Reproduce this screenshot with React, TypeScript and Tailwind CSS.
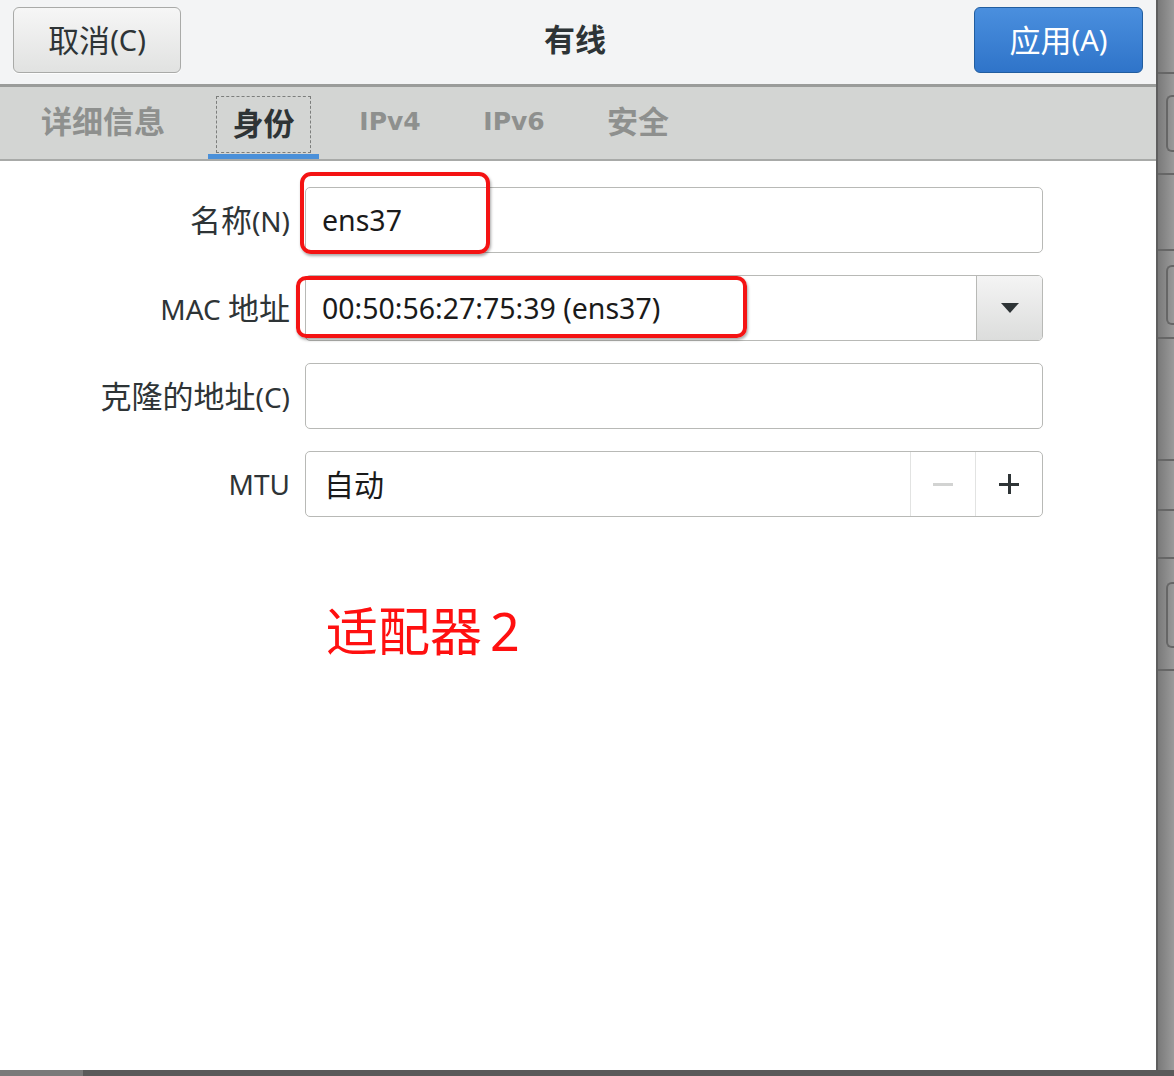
import React from "react";

const FONT = { fontFamily: '"Noto Sans", "Noto Sans CJK SC", sans-serif' };
const BOLD_FONT = { fontFamily: '"DejaVu Sans", "Noto Sans CJK SC", sans-serif' };

// Wraps runs of CJK characters so they render a touch larger than the Latin text around them
function Mixed({ text, cjk }: { text: string; cjk: string }) {
  const parts = text.split(/([\u4e00-\u9fff]+)/).filter(Boolean);
  return (
    <>
      {parts.map((p, i) =>
        /[\u4e00-\u9fff]/.test(p) ? (
          <span key={i} className={cjk}>
            {p}
          </span>
        ) : (
          <span key={i}>{p}</span>
        )
      )}
    </>
  );
}

function Triangle() {
  return (
    <svg width="18" height="10" viewBox="0 0 18 10">
      <path d="M0 0 L18 0 L9 10 Z" fill="#2e3436" />
    </svg>
  );
}

function Field({ children }: { children?: React.ReactNode }) {
  return (
    <div className="flex h-[66px] w-[738px] items-stretch overflow-hidden rounded-[5px] border border-[#b8b9b6] bg-white">
      {children}
    </div>
  );
}

function Row({ label, children }: { label: string; children: React.ReactNode }) {
  return (
    <div className="flex items-center">
      <div className="w-[291px] pr-[1px] text-right text-[28px] leading-none text-[#2e3436]">
        <Mixed text={label} cjk="text-[31px]" />
      </div>
      <div className="ml-[14px]">{children}</div>
    </div>
  );
}

export default function App() {
  const tabs = [
    { name: "详细信息", w: "w-[126px]", ml: "ml-[40px]", size: "text-[31px]" },
    { name: "身份", active: true },
    { name: "IPv4", w: "w-[56px]", ml: "ml-[43px]", size: "text-[25px]" },
    { name: "IPv6", w: "w-[56px]", ml: "ml-[68px]", size: "text-[25px]" },
    { name: "安全", w: "w-[62px]", ml: "ml-[65px]", size: "text-[31px]" },
  ];

  return (
    <div className="flex h-[1076px] w-[1174px] flex-col overflow-hidden bg-[#5c5c5c]" style={FONT}>
      <div className="flex h-[1070px]">
        {/* dialog */}
        <div className="relative flex h-full w-[1156px] flex-col bg-white">
          {/* header bar */}
          <div className="relative flex h-[87px] items-start justify-between border-b-[3px] border-[#9a9c9a] bg-[#f3f4f5] px-[13px] pt-[7px]">
            <button className="flex h-[66px] w-[168px] items-center justify-center rounded-[6px] border border-[#a9aaa8] bg-gradient-to-b from-[#f6f6f6] to-[#e1e2e1] text-[29px] text-[#2e3436] shadow-[0_1px_0_rgba(255,255,255,0.8)]">
              <Mixed text="取消(C)" cjk="text-[31px]" />
            </button>
            <div
              className="absolute left-[475px] top-[17px] w-[200px] text-center text-[31px] font-bold text-[#2e3436]"
              style={BOLD_FONT}
            >
              有线
            </div>
            <button className="flex h-[66px] w-[169px] items-center justify-center rounded-[6px] border border-[#215d9f] bg-gradient-to-b from-[#4a8fde] to-[#2f74c9] text-[29px] text-white">
              <Mixed text="应用(A)" cjk="text-[31px]" />
            </button>
          </div>

          {/* tabs */}
          <div
            className="flex h-[74px] items-stretch border-b-[2px] border-[#a8aaa8] bg-[#d3d5d3] font-bold"
            style={BOLD_FONT}
          >
            {tabs.map((t) =>
              t.active ? (
                <div key={t.name} className="ml-[42px] flex w-[111px] flex-col items-center">
                  <div className="mt-[9px] flex h-[57px] w-[95px] items-center justify-center border border-dashed border-[#7c7e7c] text-[31px] text-[#2e3436]">
                    {t.name}
                  </div>
                  <div className="mt-auto h-[5px] w-full bg-[#4a90d9]" />
                </div>
              ) : (
                <div
                  key={t.name}
                  className={`${t.ml} ${t.w} ${t.size} flex items-center justify-center pb-[2px] text-[#8e908e]`}
                >
                  {t.name}
                </div>
              )
            )}
          </div>

          {/* form */}
          <div className="flex flex-col gap-[22px] pt-[26px]">
            <Row label="名称(N)">
              <Field>
                <div className="flex items-center pl-[16px] text-[28.5px] text-[#1a1a1a]">ens37</div>
              </Field>
            </Row>
            <Row label="MAC 地址">
              <Field>
                <div className="flex flex-1 items-center pl-[16px] text-[28.5px] text-[#1a1a1a]">
                  00:50:56:27:75:39 (ens37)
                </div>
                <div className="flex w-[66px] items-center justify-center border-l border-[#b8b9b6] bg-gradient-to-b from-[#f4f4f4] to-[#dcdddc]">
                  <Triangle />
                </div>
              </Field>
            </Row>
            <Row label="克隆的地址(C)">
              <Field />
            </Row>
            <Row label="MTU">
              <Field>
                <div className="flex flex-1 items-center pl-[18px] text-[30px] text-[#1a1a1a]">自动</div>
                <div className="flex w-[65px] items-center justify-center border-l border-[#e2e3e2]">
                  <div className="h-[3px] w-[20px] bg-[#d2d3d2]" />
                </div>
                <div className="relative flex w-[67px] items-center justify-center border-l border-[#e2e3e2]">
                  <div className="h-[3px] w-[20px] bg-[#2e3436]" />
                  <div className="absolute h-[20px] w-[3px] bg-[#2e3436]" />
                </div>
              </Field>
            </Row>
          </div>

          <div className="ml-[326px] mt-[88px] flex items-baseline text-[52px] leading-none text-[#ff1010]">
            <span>适配器</span>
            <span className="ml-[8px]">2</span>
          </div>

          {/* red annotation boxes */}
          <div className="pointer-events-none absolute left-[300px] top-[172px] h-[82px] w-[190px] rounded-[11px] border-[4px] border-[#f41313] shadow-[1px_2px_3px_rgba(0,0,0,0.35)]" />
          <div className="pointer-events-none absolute left-[296px] top-[276px] h-[62px] w-[451px] rounded-[10px] border-[4px] border-[#f41313] shadow-[1px_2px_3px_rgba(0,0,0,0.35)]" />
        </div>

        {/* neighbouring window edge */}
        <div className="flex w-[18px] flex-col border-l-[2px] border-[#5e5e5e] bg-gradient-to-r from-[#7a7a7a] to-[#9a9a9a]">
          <div className="h-[74px] border-b-[2px] border-[#666]" />
          <div className="ml-[8px] mt-[21px] h-[57px] rounded-l-[6px] border-[2px] border-r-0 border-[#666]" />
          <div className="mt-[21px] h-[78px] border-y-[2px] border-[#666]" />
          <div className="ml-[8px] mt-[14px] h-[60px] rounded-l-[6px] border-[2px] border-r-0 border-[#666]" />
          <div className="mt-[12px] h-[124px] border-y-[2px] border-[#666]" />
          <div className="mt-[48px] h-[50px] border-y-[2px] border-[#666]" />
          <div className="ml-[8px] mt-[23px] h-[66px] rounded-l-[6px] border-[2px] border-r-0 border-[#666]" />
          <div className="mt-[21px] h-[2px] bg-[#666]" />
        </div>
      </div>
      <div className="flex h-[6px]">
        <div className="w-[83px] bg-[#7a7a7a]" />
        <div className="flex-1 bg-[#5a5a5a]" />
      </div>
    </div>
  );
}
